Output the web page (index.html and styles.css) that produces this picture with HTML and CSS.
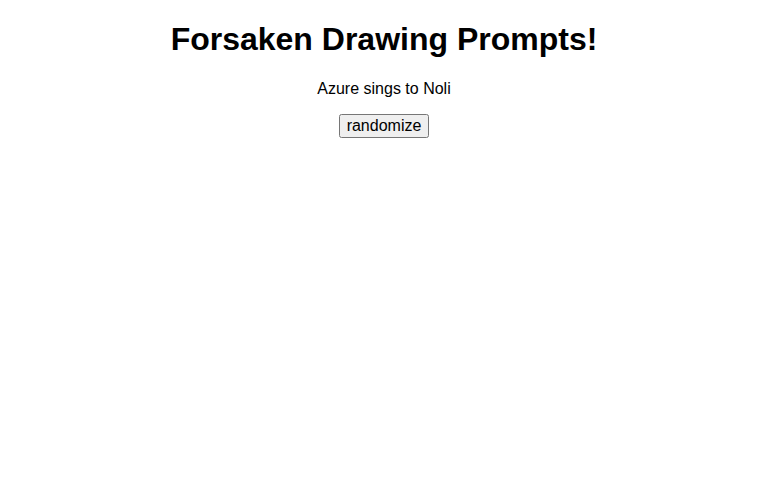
FILE: index.html
```html
<!DOCTYPE html>
<html>
<head>
<meta charset="utf-8">
<link rel="stylesheet" href="styles.css">
</head>
<body>
<div class="page">
<h1 class="title">Forsaken Drawing Prompts!</h1>
<p class="prompt">Azure sings to Noli</p>
<p class="actions"><button class="btn">randomize</button></p>
</div>
</body>
</html>
```
FILE: styles.css
```css
body {
  margin: 0 8px;
  font-family: "Liberation Sans", Arial, sans-serif;
  background: #fff;
  color: #000;
}
.page {
  text-align: center;
}
.title {
  font-size: 32px;
  font-weight: bold;
  margin: 21.44px 0;
}
.prompt {
  font-size: 16px;
  margin: 16px 0;
}
.actions {
  margin: 16px 0;
}
.btn {
  font-family: "Liberation Sans", Arial, sans-serif;
  font-size: 16px;
}
```
